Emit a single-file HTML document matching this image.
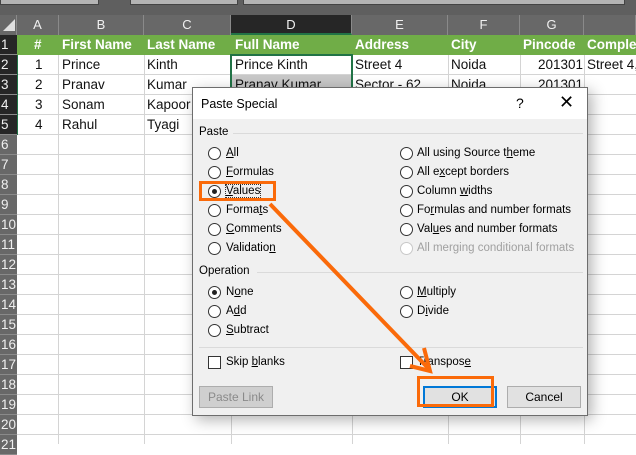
<!DOCTYPE html>
<html><head><meta charset="utf-8"><style>
*{margin:0;padding:0;box-sizing:border-box}
body{width:636px;height:444px;overflow:hidden;position:relative;background:#fff;font-family:"Liberation Sans",sans-serif}
.a{position:absolute}
.top{left:0;top:0;width:636px;height:15px;background:#5f5f5f}
.tb{top:0;height:5px;background:#b4b4b4;border:1px solid #444;border-top:none}
.colh{top:15px;height:20px;background:#686868;color:#f0f0f0;font-size:13px;text-align:center;line-height:20px;border-right:1px solid #8a8a8a}
.rowh{left:0;width:17px;height:20px;background:#686868;color:#f0f0f0;font-size:13.5px;line-height:20px;padding-left:1px;border-bottom:1px solid #8a8a8a}
.rowh.s{background:#262626}
.hl{left:17px;width:619px;height:1px;background:#d4d4d4}
.vl{top:35px;width:1px;height:409px;background:#d4d4d4}
.c{font-size:13.5px;color:#111;line-height:20px;white-space:nowrap}
.g{top:35px;height:20px;left:17px;width:619px;background:#70ad47}
.gt{color:#fff;font-weight:bold;font-size:13.5px;line-height:20px;top:35px;white-space:nowrap}
.dlg{left:192px;top:87px;width:396px;height:329px;background:#f0f0f0;border:1px solid #6d6d6d;box-shadow:4px 4px 14px rgba(0,0,0,.3)}
.tt{left:0;top:0;width:394px;height:31px;background:#fff}
.t{font-size:11.5px;color:#000;white-space:nowrap}
.rd{width:13px;height:13px;border:1px solid #333;border-radius:50%;background:#fff}
.rd.on::after{content:"";position:absolute;left:3px;top:3px;width:5px;height:5px;border-radius:50%;background:#222}
.rd.dis{border-color:#c8c8c8}
.ck{width:13px;height:13px;border:1px solid #333;background:#fff}
.sep{height:1px;background:#dadada}
.btn{height:22px;width:74px;background:#e1e1e1;border:1px solid #adadad;font-size:12px;text-align:center;line-height:20px}
.ob{border:3px solid #fa6a0a}
</style></head><body>
<div class="a top"></div>
<div class="a tb" style="left:0;width:99px"></div>
<div class="a tb" style="left:130px;width:108px"></div>
<div class="a tb" style="left:243px;width:382px"></div>

<div class="a colh" style="left:0;width:17px;border-right:1px solid #8a8a8a"></div>
<div class="a" style="left:3px;top:19px;width:0;height:0;border-left:12px solid transparent;border-bottom:12px solid #e0e0e0"></div>
<div class="a colh" style="left:17px;width:42px">A</div>
<div class="a colh" style="left:59px;width:85px">B</div>
<div class="a colh" style="left:144px;width:87px">C</div>
<div class="a colh" style="left:231px;width:121px;background:#262626;border-bottom:2px solid #217346">D</div>
<div class="a colh" style="left:352px;width:96px">E</div>
<div class="a colh" style="left:448px;width:72px">F</div>
<div class="a colh" style="left:520px;width:64px">G</div>
<div class="a colh" style="left:584px;width:52px"></div>

<div class="a rowh s" style="top:35px">1</div>
<div class="a rowh s" style="top:55px">2</div>
<div class="a rowh s" style="top:75px">3</div>
<div class="a rowh s" style="top:95px">4</div>
<div class="a rowh s" style="top:115px">5</div>
<div class="a rowh" style="top:135px">6</div>
<div class="a rowh" style="top:155px">7</div>
<div class="a rowh" style="top:175px">8</div>
<div class="a rowh" style="top:195px">9</div>
<div class="a rowh" style="top:215px">10</div>
<div class="a rowh" style="top:235px">11</div>
<div class="a rowh" style="top:255px">12</div>
<div class="a rowh" style="top:275px">13</div>
<div class="a rowh" style="top:295px">14</div>
<div class="a rowh" style="top:315px">15</div>
<div class="a rowh" style="top:335px">16</div>
<div class="a rowh" style="top:355px">17</div>
<div class="a rowh" style="top:375px">18</div>
<div class="a rowh" style="top:395px">19</div>
<div class="a rowh" style="top:415px">20</div>
<div class="a rowh" style="top:435px">21</div>

<div class="a" style="left:231px;top:75px;width:121px;height:60px;background:#c8c8c8"></div>
<div class="a hl" style="top:74px"></div><div class="a hl" style="top:94px"></div><div class="a hl" style="top:114px"></div><div class="a hl" style="top:134px"></div><div class="a hl" style="top:154px"></div><div class="a hl" style="top:174px"></div><div class="a hl" style="top:194px"></div><div class="a hl" style="top:214px"></div><div class="a hl" style="top:234px"></div><div class="a hl" style="top:254px"></div><div class="a hl" style="top:274px"></div><div class="a hl" style="top:294px"></div><div class="a hl" style="top:314px"></div><div class="a hl" style="top:334px"></div><div class="a hl" style="top:354px"></div><div class="a hl" style="top:374px"></div><div class="a hl" style="top:394px"></div><div class="a hl" style="top:414px"></div><div class="a hl" style="top:434px"></div>
<div class="a vl" style="left:58px"></div><div class="a vl" style="left:144px"></div><div class="a vl" style="left:231px"></div><div class="a vl" style="left:352px"></div><div class="a vl" style="left:448px"></div><div class="a vl" style="left:520px"></div><div class="a vl" style="left:584px"></div>
<div class="a" style="left:17px;top:35px;width:1px;height:100px;background:#217346"></div>

<div class="a g"></div>
<div class="a gt" style="left:34px">#</div>
<div class="a gt" style="left:62px">First Name</div>
<div class="a gt" style="left:147px">Last Name</div>
<div class="a gt" style="left:235px">Full Name</div>
<div class="a gt" style="left:355px">Address</div>
<div class="a gt" style="left:451px">City</div>
<div class="a gt" style="left:523px">Pincode</div>
<div class="a gt" style="left:587px">Complet</div>

<div class="a" style="left:230px;top:54px;width:123px;height:82px;border:2px solid #217346"></div>
<div class="a c" style="left:35px;top:55px">1</div><div class="a c" style="left:62px;top:55px">Prince</div><div class="a c" style="left:147px;top:55px">Kinth</div><div class="a c" style="left:235px;top:55px">Prince Kinth</div><div class="a c" style="left:355px;top:55px">Street 4</div><div class="a c" style="left:451px;top:55px">Noida</div><div class="a c" style="left:538px;top:55px">201301</div><div class="a c" style="left:587px;top:55px">Street 4,</div>
<div class="a c" style="left:35px;top:75px">2</div><div class="a c" style="left:62px;top:75px">Pranav</div><div class="a c" style="left:147px;top:75px">Kumar</div><div class="a c" style="left:235px;top:75px">Pranav Kumar</div><div class="a c" style="left:355px;top:75px">Sector - 62</div><div class="a c" style="left:451px;top:75px">Noida</div><div class="a c" style="left:538px;top:75px">201301</div>
<div class="a c" style="left:35px;top:95px">3</div><div class="a c" style="left:62px;top:95px">Sonam</div><div class="a c" style="left:147px;top:95px">Kapoor</div>
<div class="a c" style="left:35px;top:115px">4</div><div class="a c" style="left:62px;top:115px">Rahul</div><div class="a c" style="left:147px;top:115px">Tyagi</div>

<div class="a dlg">
 <div class="a tt"></div>
 <div class="a t" style="left:8px;top:9px;font-size:12.5px">Paste Special</div>
 <div class="a t" style="left:323px;top:7px;font-size:14px">?</div>
 <div class="a t" style="left:366px;top:4px;font-size:18px">✕</div>

 <div class="a t" style="left:6px;top:38px">Paste</div><div class="a sep" style="left:40px;top:45px;width:350px"></div>
 <div class="a rd" style="left:15px;top:59px"></div><div class="a t" style="left:33px;top:59px"><u>A</u>ll</div>
 <div class="a rd" style="left:15px;top:78px"></div><div class="a t" style="left:33px;top:78px"><u>F</u>ormulas</div>
 <div class="a rd on" style="left:15px;top:97px"></div><div class="a t" style="left:33px;top:97px;outline:1px dotted #333"><u>V</u>alues</div>
 <div class="a rd" style="left:15px;top:116px"></div><div class="a t" style="left:33px;top:116px">Forma<u>t</u>s</div>
 <div class="a rd" style="left:15px;top:135px"></div><div class="a t" style="left:33px;top:135px"><u>C</u>omments</div>
 <div class="a rd" style="left:15px;top:154px"></div><div class="a t" style="left:33px;top:154px">Validatio<u>n</u></div>
 <div class="a rd" style="left:207px;top:59px"></div><div class="a t" style="left:224px;top:59px">All using Source t<u>h</u>eme</div>
 <div class="a rd" style="left:207px;top:78px"></div><div class="a t" style="left:224px;top:78px">All e<u>x</u>cept borders</div>
 <div class="a rd" style="left:207px;top:97px"></div><div class="a t" style="left:224px;top:97px">Column <u>w</u>idths</div>
 <div class="a rd" style="left:207px;top:116px"></div><div class="a t" style="left:224px;top:116px">Fo<u>r</u>mulas and number formats</div>
 <div class="a rd" style="left:207px;top:135px"></div><div class="a t" style="left:224px;top:135px">Val<u>u</u>es and number formats</div>
 <div class="a rd dis" style="left:207px;top:154px"></div><div class="a t" style="left:224px;top:154px;color:#a0a0a0">All merging conditional formats</div>

 <div class="a t" style="left:6px;top:177px">Operation</div><div class="a sep" style="left:64px;top:184px;width:326px"></div>
 <div class="a rd on" style="left:15px;top:198px"></div><div class="a t" style="left:33px;top:198px">N<u>o</u>ne</div>
 <div class="a rd" style="left:15px;top:217px"></div><div class="a t" style="left:33px;top:217px">A<u>d</u>d</div>
 <div class="a rd" style="left:15px;top:236px"></div><div class="a t" style="left:33px;top:236px"><u>S</u>ubtract</div>
 <div class="a rd" style="left:207px;top:198px"></div><div class="a t" style="left:224px;top:198px"><u>M</u>ultiply</div>
 <div class="a rd" style="left:207px;top:217px"></div><div class="a t" style="left:224px;top:217px">D<u>i</u>vide</div>
 <div class="a sep" style="left:6px;top:259px;width:384px"></div>
 <div class="a ck" style="left:15px;top:268px"></div><div class="a t" style="left:33px;top:268px">Skip <u>b</u>lanks</div>
 <div class="a ck" style="left:207px;top:268px"></div><div class="a t" style="left:224px;top:268px">Transpos<u>e</u></div>

 <div class="a btn" style="left:6px;top:298px;color:#8a8a8a;background:#cfcfcf">Paste Link</div>
 <div class="a btn" style="left:230px;top:298px;border:2px solid #0078d7;line-height:18px">OK</div>
 <div class="a btn" style="left:314px;top:298px">Cancel</div>
</div>

<div class="a ob" style="left:199px;top:181px;width:77px;height:20px"></div>
<div class="a ob" style="left:417px;top:376px;width:77px;height:31px"></div>
<svg class="a" style="left:0;top:0" width="636" height="444">
 <line x1="270" y1="204" x2="428" y2="368" stroke="#fa6a0a" stroke-width="4"/>
 <polyline points="424,348 430,371 410,366" fill="none" stroke="#fa6a0a" stroke-width="4"/>
</svg>
</body></html>
